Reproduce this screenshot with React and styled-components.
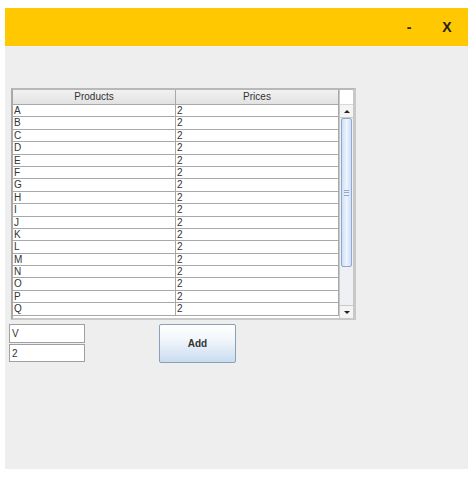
import React from 'react';
import styled, { createGlobalStyle } from 'styled-components';

const rows = 'ABCDEFGHIJKLMNOPQ'.split('');

const Global = createGlobalStyle`
  html, body { margin: 0; padding: 0; background: #ffffff; }
  body { font-family: "Liberation Sans", Arial, sans-serif; }
`;

const Frame = styled.div`
  margin: 8px 0 0 5px;
  width: 463px;
  height: 461px;
  background: #eeeeee;
  display: flex;
  flex-direction: column;
`;

const TitleBar = styled.div`
  height: 38px;
  background: #ffc800;
  display: flex;
  align-items: center;
  justify-content: flex-end;
  padding-right: 16px;
  gap: 28px;
  font-weight: bold;
  font-size: 14px;
  color: #222;
`;

const TitleButton = styled.span`
  width: 10px;
  text-align: center;
  line-height: 14px;
`;

const Content = styled.div`
  padding: 42px 0 0 6px;
  display: flex;
  flex-direction: column;
`;

const ScrollPane = styled.div`
  width: 340px;
  height: 228px;
  border-left: 2px solid #a9a9a9;
  border-top: 2px solid #b8b8b8;
  border-right: 3px solid #c8c8c8;
  border-bottom: 2px solid #c8c8c8;
  background: #ffffff;
  display: flex;
  overflow: hidden;
`;

const TableArea = styled.div`
  width: 326px;
  display: flex;
  flex-direction: column;
`;

const HeaderRow = styled.div`
  height: 14px;
  display: flex;
  background: linear-gradient(#f2f2f2, #e2e2e2);
  border-bottom: 1px solid #a8a8a8;
`;

const HeaderCell = styled.div`
  flex: 1;
  text-align: center;
  font-size: 10px;
  line-height: 14px;
  color: #333;
  border-right: 1px solid #a8a8a8;
`;

const Row = styled.div`
  height: 11.4px;
  display: flex;
  border-bottom: 1px solid #a8a8a8;
`;

const Cell = styled.div`
  flex: 1;
  font-size: 10px;
  line-height: 12px;
  color: #333;
  padding-left: 1px;
  border-right: 1px solid #a8a8a8;
  overflow: hidden;
`;

const ScrollBar = styled.div`
  width: 13px;
  display: flex;
  flex-direction: column;
  border-left: 1px solid #c8c8c8;
`;

const Corner = styled.div`
  height: 14px;
  background: #ffffff;
  border-bottom: 1px solid #d8d8d8;
`;

const ArrowButton = styled.div`
  height: 12px;
  display: flex;
  align-items: center;
  justify-content: center;
  background: #f4f4f4;
  border-bottom: ${p => (p.down ? 'none' : '1px solid #c8c8c8')};
  border-top: ${p => (p.down ? '1px solid #c8c8c8' : 'none')};
`;

const Arrow = styled.div`
  width: 0;
  height: 0;
  border-left: 3px solid transparent;
  border-right: 3px solid transparent;
  ${p => (p.down ? 'border-top: 3px solid #222;' : 'border-bottom: 3px solid #222;')}
`;

const Track = styled.div`
  flex: 1;
  background: #eef0f4;
  display: flex;
  flex-direction: column;
`;

const Thumb = styled.div`
  height: 147px;
  margin: 0 1px;
  border: 1px solid #8ea8cf;
  border-radius: 2px;
  background: linear-gradient(90deg, #cfdff5, #eef4fc 50%, #cfdff5);
  display: flex;
  align-items: center;
  justify-content: center;
`;

const Grip = styled.div`
  width: 5px;
  height: 4px;
  border-top: 1px solid #8ea8cf;
  border-bottom: 1px solid #8ea8cf;
  position: relative;
  &::after {
    content: '';
    position: absolute;
    left: 0;
    right: 0;
    top: 1.5px;
    border-top: 1px solid #8ea8cf;
  }
`;

const Controls = styled.div`
  display: flex;
  margin-top: 4px;
  margin-left: -2px;
  gap: 74px;
`;

const Fields = styled.div`
  display: flex;
  flex-direction: column;
  gap: 1px;
`;

const Field = styled.input.attrs({ type: 'text', readOnly: true })`
  width: 76px;
  height: 18px;
  box-sizing: border-box;
  border: 1px solid #a0a0a0;
  padding: 0 2px;
  font-family: "Liberation Sans", Arial, sans-serif;
  font-size: 10px;
  color: #333;
  outline: none;
  background: #fff;
  &:first-child { height: 19px; }
`;

const AddButton = styled.button`
  width: 77px;
  height: 39px;
  border: 1px solid #8a9fb8;
  border-radius: 2px;
  background: linear-gradient(#ffffff, #f2f6fb 40%, #c9dcef);
  font-family: "Liberation Sans", Arial, sans-serif;
  font-weight: bold;
  font-size: 10px;
  color: #333;
  padding: 0;
`;

function App() {
  return (
    <>
      <Global />
      <Frame>
        <TitleBar>
          <TitleButton>-</TitleButton>
          <TitleButton>X</TitleButton>
        </TitleBar>
        <Content>
          <ScrollPane>
            <TableArea>
              <HeaderRow>
                <HeaderCell>Products</HeaderCell>
                <HeaderCell>Prices</HeaderCell>
              </HeaderRow>
              {rows.map(r => (
                <Row key={r}>
                  <Cell>{r}</Cell>
                  <Cell>2</Cell>
                </Row>
              ))}
            </TableArea>
            <ScrollBar>
              <Corner />
              <ArrowButton>
                <Arrow />
              </ArrowButton>
              <Track>
                <Thumb>
                  <Grip />
                </Thumb>
              </Track>
              <ArrowButton down>
                <Arrow down />
              </ArrowButton>
            </ScrollBar>
          </ScrollPane>
          <Controls>
            <Fields>
              <Field defaultValue="V" />
              <Field defaultValue="2" />
            </Fields>
            <AddButton>Add</AddButton>
          </Controls>
        </Content>
      </Frame>
    </>
  );
}

export default App;
